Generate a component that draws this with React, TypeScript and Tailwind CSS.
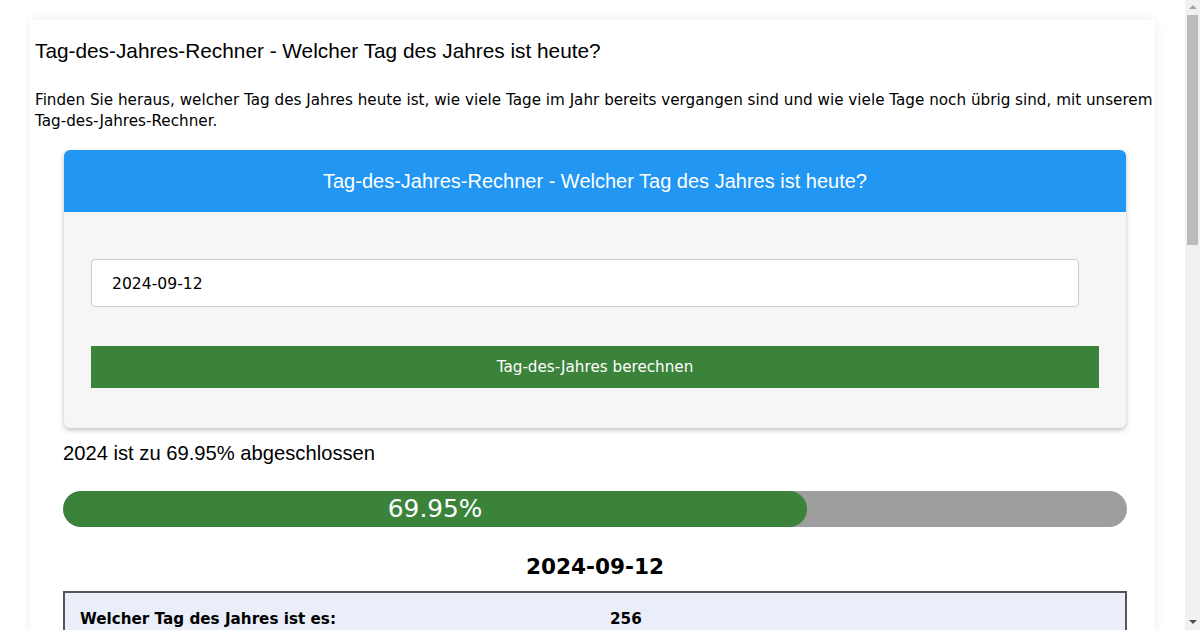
import { useState } from "react";

const dejavu = { fontFamily: '"DejaVu Sans", Verdana, sans-serif' };

const rows: [string, string][] = [
  ["Welcher Tag des Jahres ist es:", "256"],
  ["Vergangene Tage im Jahr:", "255"],
  ["Verbleibende Tage im Jahr:", "110"],
  ["Tage im Jahr insgesamt:", "366"],
];

function Scrollbar() {
  return (
    <div className="flex w-[15px] shrink-0 flex-col items-center bg-[#f1f1f1]">
      <div className="mt-[5px] h-0 w-0 border-x-[4px] border-b-[4px] border-x-transparent border-b-[#a3a3a3]" />
      <div className="mt-[6px] h-[230px] w-[11px] bg-[#bcbcbc]" />
      <div className="flex-1" />
      <div className="mb-[6px] h-0 w-0 border-x-[4px] border-t-[4px] border-x-transparent border-t-[#505050]" />
    </div>
  );
}

export default function App() {
  const [date, setDate] = useState("2024-09-12");
  const pct = 69.95;

  return (
    <div className="flex h-[630px] overflow-hidden bg-white text-black">
      <div className="w-[1185px] shrink-0 overflow-hidden pt-[20px] pb-10">
        <div className="mx-[30px] bg-white pl-[5px] pb-10 shadow-[0_0_10px_rgba(0,0,0,0.08)]">
          <h1 className="pt-[19px] font-['Liberation_Sans',Arial,sans-serif] text-[20.8px] leading-[23px]">
            Tag-des-Jahres-Rechner - Welcher Tag des Jahres ist heute?
          </h1>
          <p className="mt-[28px] text-[15.2px] leading-[21px]" style={dejavu}>
            Finden Sie heraus, welcher Tag des Jahres heute ist, wie viele Tage im Jahr bereits vergangen sind und wie
            viele Tage noch übrig sind, mit unserem Tag-des-Jahres-Rechner.
          </p>

          <div className="mx-auto w-[1064px]">
            <div className="mx-auto mt-[18px] w-[1062px] overflow-hidden rounded-[6px] bg-[#f6f6f6] shadow-[0_2px_5px_rgba(0,0,0,0.25)]">
              <div className="flex h-[62px] items-center justify-center bg-[#2196f3] font-['Liberation_Sans',Arial,sans-serif] text-[20px] text-white">
                Tag-des-Jahres-Rechner - Welcher Tag des Jahres ist heute?
              </div>
              <div className="px-[27px] pt-[47px] pb-[40px]">
                <input
                  value={date}
                  onChange={(e) => setDate(e.target.value)}
                  className="block h-[48px] w-[988px] rounded-[4px] border border-[#ccc] bg-white px-[20px] pt-[2px] text-[15.6px] text-black outline-none"
                  style={dejavu}
                />
                <button
                  className="mt-[39px] block h-[42px] w-full bg-[#3b833a] text-[15.2px] text-white"
                  style={dejavu}
                >
                  Tag-des-Jahres berechnen
                </button>
              </div>
            </div>

            <div className="mt-[14px] font-['Liberation_Sans',Arial,sans-serif] text-[20.2px] leading-[23px]">
              2024 ist zu {pct}% abgeschlossen
            </div>

            <div className="mt-[26px] h-[36px] w-full overflow-hidden rounded-full bg-[#9e9e9e]">
              <div
                className="flex h-full items-center justify-center rounded-full bg-[#3b833a] text-[24.8px] text-white"
                style={{ ...dejavu, width: `${pct}%` }}
              >
                {pct}%
              </div>
            </div>

            <div className="mt-[27px] text-center text-[21.6px] font-bold leading-[25px]" style={dejavu}>
              2024-09-12
            </div>

            <table
              className="mt-[12px] w-full table-fixed border-2 border-[#555] bg-[#e9eef9] text-[15.2px]"
              style={dejavu}
            >
              <tbody>
                {rows.map(([label, value]) => (
                  <tr key={label}>
                    <td className="w-1/2 px-[15px] py-[15px] font-bold">{label}</td>
                    <td className="w-1/2 px-[15px] py-[15px] font-bold">{value}</td>
                  </tr>
                ))}
              </tbody>
            </table>
          </div>
        </div>
      </div>
      <Scrollbar />
    </div>
  );
}
